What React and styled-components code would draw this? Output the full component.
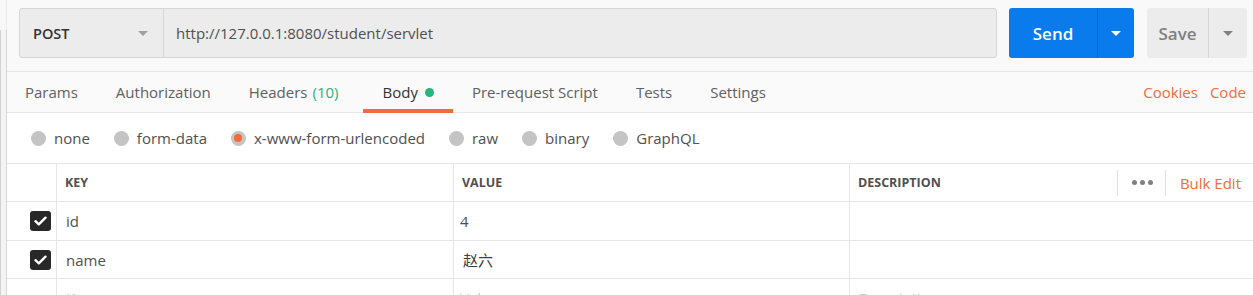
import React from "react";
import styled, { createGlobalStyle } from "styled-components";

const Global = createGlobalStyle`
  html, body { margin: 0; padding: 0; background: #fff; }
  body { font-family: "Open Sans", "Noto Sans CJK SC", sans-serif; -webkit-font-smoothing: antialiased; }
  * { box-sizing: border-box; }
`;

const Page = styled.div`
  display: flex;
  width: 1253px;
  height: 295px;
  overflow: hidden;
`;

const LeftStrip = styled.div`
  width: 7px;
  flex: none;
  display: flex;
  flex-direction: column;
  background: #f3f3f3;
`;

const StripTop = styled.div`
  height: 30px;
  flex: none;
  background: #f7f7f7;
  border-right: 1px solid #ececec;
`;

const StripRest = styled.div`
  flex: 1;
  border-left: 1px solid #d2d2d2;
  border-right: 1px solid #d6d6d6;
  background: #f4f4f4;
`;

const Main = styled.div`
  flex: 1;
  display: flex;
  flex-direction: column;
  min-width: 0;
  & > * { flex: none; }
`;

const TopBar = styled.div`
  height: 72px;
  padding: 8px 6px 0 12px;
  background: #f9f9f9;
  border-bottom: 1px solid #e6e6e6;
  display: flex;
  align-items: flex-start;
`;

const UrlGroup = styled.div`
  flex: 1;
  height: 50px;
  display: flex;
  border: 1px solid #d6d6d6;
  border-radius: 3px;
  background: #ececec;
  margin-right: 12px;
`;

const MethodBox = styled.div`
  width: 144px;
  display: flex;
  align-items: center;
  justify-content: space-between;
  padding: 0 15px 0 13px;
  border-right: 1px solid #d6d6d6;
  font-size: 14.5px;
  font-weight: 600;
  color: #333;
`;

const Caret = styled.span`
  width: 0;
  height: 0;
  border-left: ${(p) => p.$w / 2}px solid transparent;
  border-right: ${(p) => p.$w / 2}px solid transparent;
  border-top: ${(p) => p.$h}px solid ${(p) => p.$color};
`;

const UrlText = styled.div`
  display: flex;
  align-items: center;
  padding-left: 12px;
  font-size: 15px;
  color: #505050;
`;

const SplitButton = styled.div`
  width: ${(p) => p.$w}px;
  height: 50px;
  display: flex;
  border-radius: 3px;
  background: ${(p) => p.$bg};
  color: ${(p) => p.$fg};
  margin-right: ${(p) => p.$mr || 0}px;
  flex: none;
`;

const ButtonMain = styled.div`
  width: ${(p) => p.$w}px;
  display: flex;
  align-items: center;
  justify-content: center;
  font-size: 17px;
  font-weight: 600;
  border-right: 1px solid ${(p) => p.$div};
`;

const ButtonCaret = styled.div`
  flex: 1;
  display: flex;
  align-items: center;
  justify-content: center;
`;

const TabBar = styled.div`
  height: 41px;
  background: #fafafa;
  border-bottom: 1px solid #e6e6e6;
  display: flex;
  align-items: stretch;
  padding-right: 7px;
`;

const Tab = styled.div`
  position: relative;
  display: flex;
  align-items: center;
  padding: 0 19px 0 ${(p) => p.$padl ?? 19}px;
  margin-left: ${(p) => p.$ml || 0}px;
  font-size: 15px;
  color: ${(p) => (p.$active ? "#333" : "#606060")};
  &::after {
    content: "";
    display: ${(p) => (p.$active ? "block" : "none")};
    position: absolute;
    left: 0;
    right: 0;
    bottom: -1px;
    height: 4px;
    background: #f26b3a;
  }
`;

const Count = styled.span`
  color: #26b47f;
  margin-left: 5px;
`;

const GreenDot = styled.span`
  width: 9px;
  height: 9px;
  border-radius: 50%;
  background: #26b47f;
  margin-left: 7px;
`;

const Spacer = styled.div`
  flex: 1;
`;

const LinkTab = styled.div`
  display: flex;
  align-items: center;
  font-size: 15px;
  color: #f26b3a;
  margin-left: ${(p) => p.$ml || 0}px;
`;

const RadioRow = styled.div`
  height: 51px;
  border-bottom: 1px solid #e6e6e6;
  display: flex;
  align-items: center;
  padding-left: 24px;
  gap: 24px;
  background: #fff;
`;

const RadioItem = styled.div`
  display: flex;
  align-items: center;
  gap: 8px;
  font-size: 15px;
  color: #505050;
`;

const RadioCircle = styled.span`
  width: 15px;
  height: 15px;
  border-radius: 50%;
  background: #c4c4c4;
  display: flex;
  align-items: center;
  justify-content: center;
  &::after {
    content: "";
    display: ${(p) => (p.$on ? "block" : "none")};
    width: 8px;
    height: 8px;
    border-radius: 50%;
    background: #f26b3a;
  }
`;

const Table = styled.div`
  display: flex;
  flex-direction: column;
`;

const Row = styled.div`
  display: grid;
  grid-template-columns: 50px 397px 396px 1fr;
  height: ${(p) => p.$h}px;
  border-bottom: 1px solid #e6e6e6;
  flex: none;
`;

const Cell = styled.div`
  display: flex;
  align-items: center;
  padding-left: ${(p) => p.$pl ?? 8}px;
  border-right: ${(p) => (p.$last ? "none" : "1px solid #e6e6e6")};
  font-size: ${(p) => (p.$head ? 12.5 : 15)}px;
  font-weight: ${(p) => (p.$head ? 700 : 400)};
  color: ${(p) => (p.$placeholder ? "#c4c4c4" : "#505050")};
  text-transform: ${(p) => (p.$head ? "uppercase" : "none")};
  overflow: hidden;
  white-space: nowrap;
`;

const CjkText = styled.span`
  font-family: "Noto Sans CJK SC", sans-serif;
  font-size: 15px;
  color: #404040;
`;

const HeadTools = styled.div`
  margin-left: auto;
  display: flex;
  align-items: center;
  height: 100%;
  padding-right: 12px;
`;

const Sep = styled.span`
  width: 1px;
  height: 26px;
  background: #e2e2e2;
`;

const Dots = styled.span`
  display: flex;
  gap: 3px;
  padding: 0 12px 0 14px;
  span {
    width: 5px;
    height: 5px;
    border-radius: 50%;
    background: #808080;
  }
`;

const BulkEdit = styled.span`
  font-size: 15px;
  font-weight: 400;
  color: #f26b3a;
  text-transform: none;
  margin-left: 14px;
`;

const CheckBox = styled.span`
  width: 21px;
  height: 20px;
  border-radius: 3px;
  background: #282828;
  display: flex;
  align-items: center;
  justify-content: center;
`;

function Check() {
  return (
    <CheckBox>
      <svg width="13" height="10" viewBox="0 0 13 10">
        <path d="M1.5 5.2 L4.8 8.3 L11.5 1.7" fill="none" stroke="#fff" strokeWidth="2.4" strokeLinecap="round" strokeLinejoin="round" />
      </svg>
    </CheckBox>
  );
}

export default function App() {
  const tabs = [
    { label: "Params", padl: 18 },
    { label: "Authorization" },
    { label: "Headers", count: "(10)" },
    { label: "Body", active: true, ml: 6 },
    { label: "Pre-request Script" },
    { label: "Tests" },
    { label: "Settings" },
  ];
  const radios = [
    { label: "none" },
    { label: "form-data" },
    { label: "x-www-form-urlencoded", on: true },
    { label: "raw" },
    { label: "binary" },
    { label: "GraphQL" },
  ];
  return (
    <Page>
      <Global />
      <LeftStrip>
        <StripTop />
        <StripRest />
      </LeftStrip>
      <Main>
        <TopBar>
          <UrlGroup>
            <MethodBox>
              POST
              <Caret $w={10} $h={5} $color="#a0a0a0" />
            </MethodBox>
            <UrlText>http://127.0.0.1:8080/student/servlet</UrlText>
          </UrlGroup>
          <SplitButton $w={125} $bg="#097bed" $fg="#fff" $mr={13}>
            <ButtonMain $w={89} $div="#0868cc">Send</ButtonMain>
            <ButtonCaret>
              <Caret $w={10} $h={5} $color="#fff" />
            </ButtonCaret>
          </SplitButton>
          <SplitButton $w={100} $bg="#ececec" $fg="#808080">
            <ButtonMain $w={62} $div="#d8d8d8">Save</ButtonMain>
            <ButtonCaret>
              <Caret $w={10} $h={5} $color="#808080" />
            </ButtonCaret>
          </SplitButton>
        </TopBar>
        <TabBar>
          {tabs.map((t) => (
            <Tab key={t.label} $active={t.active} $padl={t.padl} $ml={t.ml}>
              {t.label}
              {t.count && <Count>{t.count}</Count>}
              {t.active && <GreenDot />}
            </Tab>
          ))}
          <Spacer />
          <LinkTab>Cookies</LinkTab>
          <LinkTab $ml={12}>Code</LinkTab>
        </TabBar>
        <RadioRow>
          {radios.map((r) => (
            <RadioItem key={r.label}>
              <RadioCircle $on={r.on} />
              {r.label}
            </RadioItem>
          ))}
        </RadioRow>
        <Table>
          <Row $h={38}>
            <Cell />
            <Cell $head>Key</Cell>
            <Cell $head>Value</Cell>
            <Cell $head $last>
              Description
              <HeadTools>
                <Sep />
                <Dots>
                  <span />
                  <span />
                  <span />
                </Dots>
                <Sep />
                <BulkEdit>Bulk Edit</BulkEdit>
              </HeadTools>
            </Cell>
          </Row>
          <Row $h={39}>
            <Cell $pl={23}>
              <Check />
            </Cell>
            <Cell $pl={9}>id</Cell>
            <Cell $pl={6}>4</Cell>
            <Cell $last />
          </Row>
          <Row $h={38}>
            <Cell $pl={23}>
              <Check />
            </Cell>
            <Cell $pl={9}>name</Cell>
            <Cell $pl={9}>
              <CjkText>赵六</CjkText>
            </Cell>
            <Cell $last />
          </Row>
          <Row $h={38}>
            <Cell />
            <Cell $placeholder $pl={9}>Key</Cell>
            <Cell $placeholder $pl={6}>Value</Cell>
            <Cell $placeholder $last $pl={9}>Description</Cell>
          </Row>
        </Table>
      </Main>
    </Page>
  );
}
